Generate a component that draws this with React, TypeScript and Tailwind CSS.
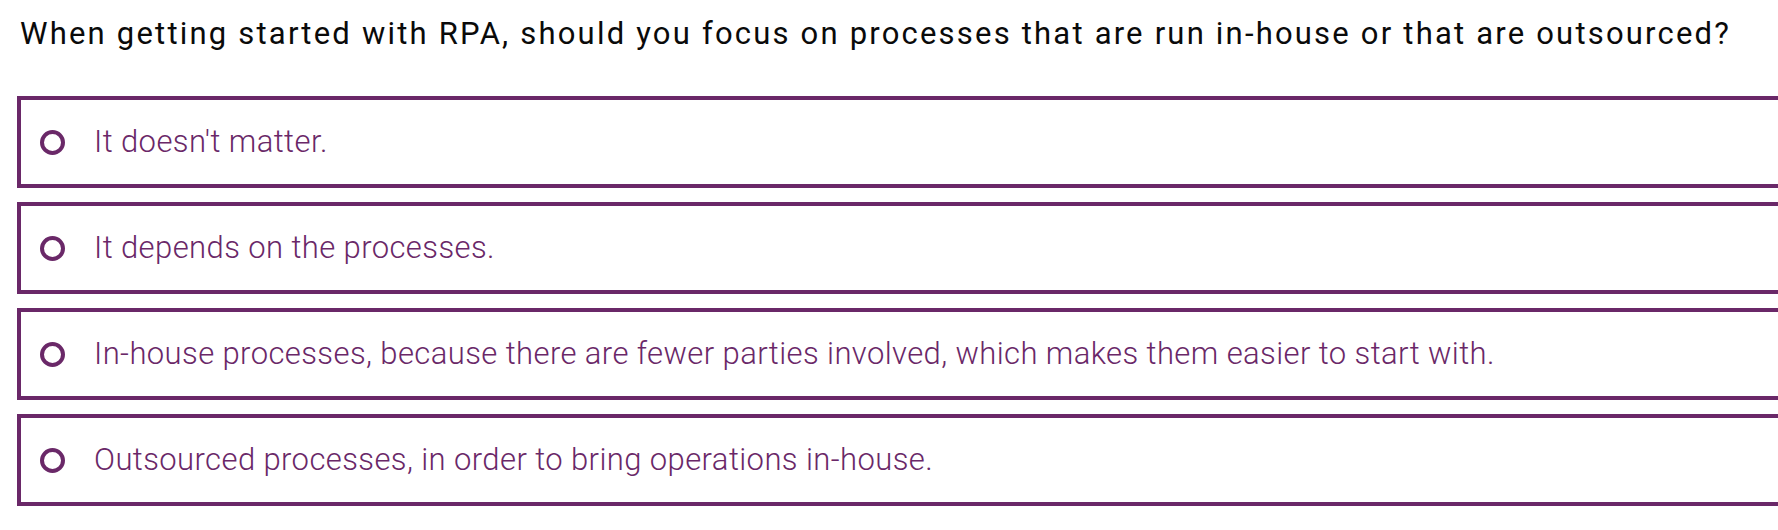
import React from "react";

const options = [
  "It doesn't matter.",
  "It depends on the processes.",
  "In-house processes, because there are fewer parties involved, which makes them easier to start with.",
  "Outsourced processes, in order to bring operations in-house.",
];

export default function App() {
  return (
    <div className="w-[1778px] h-[530px] overflow-hidden bg-white" style={{ fontFamily: "Roboto, 'Liberation Sans', sans-serif" }}>
      <div className="pt-[15px] pl-[20px] text-[31px] leading-[38px] text-[#0a0a0a] tracking-[2.2px] whitespace-nowrap">
        When getting started with RPA, should you focus on processes that are run in-house or that are outsourced?
      </div>
      <div className="mt-[43px] ml-[17px] w-[1790px] flex flex-col gap-[14px]">
        {options.map((o) => (
          <div key={o} className="h-[92px] border-[4px] border-[#6a2868] flex items-center pl-[19px]">
            <div className="w-[25px] h-[25px] rounded-full border-[4px] border-[#6a2868] blur-[0.5px] shrink-0" />
            <div className="ml-[29px] text-[31px] font-light text-[#6a2868] tracking-[0.4px] whitespace-nowrap">{o}</div>
          </div>
        ))}
      </div>
    </div>
  );
}
